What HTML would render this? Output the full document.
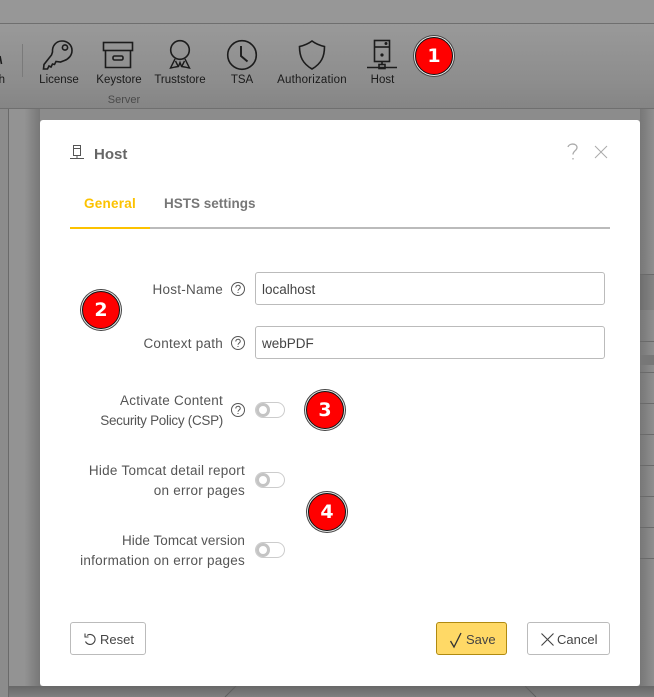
<!DOCTYPE html>
<html><head><meta charset="utf-8"><style>
html,body{margin:0;padding:0}
body{width:654px;height:697px;overflow:hidden;position:relative;background:#8c8c8c;font-family:"Liberation Sans",sans-serif;color:#333}
.a{position:absolute;white-space:nowrap}
.tb{font-size:11.5px;color:#1a1a1a;text-align:center;top:73px;height:14px;line-height:14px}
.lb{font-size:13.5px;letter-spacing:.25px;color:#555;text-align:right;line-height:20px}
.in{left:255px;width:348px;height:31px;border:1px solid #bbb;border-radius:3px;background:#fff;font-size:13.5px;color:#444;line-height:33px;text-indent:6px}
.bd{width:36px;height:36px;border-radius:50%;background:#f00;border:1px solid #111;box-shadow:0 0 0 1px #e8e8e8,0 0 0 2px #444;color:#fff;font:bold 19px/37px "DejaVu Sans",sans-serif;text-align:center}
.sw{left:255px;width:28px;height:14px;border:1px solid #ccc;border-radius:8px;background:#fff}
.sw:after{content:"";position:absolute;left:0;top:0;width:8px;height:8px;border:3px solid #c4c4c4;border-radius:50%;background:#fff}
.btn{height:31px;border:1px solid #bbb;border-radius:3px;background:#fff;font-size:13px;color:#444;line-height:33px}
svg{position:absolute;overflow:visible;fill:none}
.r{left:640px;width:14px;height:1px;background:#6a6a6a}
</style></head><body>
<div class="a" style="left:0;top:0;width:654px;height:23px;background:#979797"></div>
<div class="a" style="left:0;top:23px;width:654px;height:1px;background:#6f6f6f"></div>
<div class="a" style="left:0;top:24px;width:654px;height:84px;background:linear-gradient(#999,#8d8d8d 70%,#858585)"></div>
<div class="a" style="left:0;top:108px;width:654px;height:1px;background:#6f6f6f"></div>
<div class="a" style="left:0;top:109px;width:8px;height:588px;background:#8c8c8c"></div>
<div class="a" style="left:8px;top:109px;width:1px;height:588px;background:#6a6a6a"></div>
<div class="a" style="left:22px;top:44px;width:1px;height:33px;background:#7a7a7a"></div>
<div class="a" style="left:9px;top:109px;width:31px;height:588px;background:linear-gradient(90deg,#939393 50%,#777)"></div>
<div class="a" style="left:640px;top:109px;width:14px;height:588px;background:linear-gradient(90deg,#777,#8f8f8f)"></div>
<div class="a" style="left:9px;top:686px;width:645px;height:11px;background:linear-gradient(#686868,#808080)"></div>
<svg style="left:0;top:0" width="654" height="697"><path d="M225 697l11-11M525 686l11 11" stroke="#5f5f5f" stroke-width="1"/></svg>
<div class="a" style="left:640px;top:275px;width:14px;height:35px;background:rgba(0,0,0,.07)"></div>
<div class="a r" style="top:274px"></div>
<div class="a r" style="top:341px"></div>
<div class="a" style="left:640px;top:355px;width:14px;height:10px;background:#777"></div>
<div class="a r" style="top:372px"></div>
<div class="a r" style="top:403px"></div>
<div class="a r" style="top:434px"></div>
<div class="a r" style="top:465px"></div>
<div class="a r" style="top:496px"></div>
<div class="a r" style="top:527px"></div>
<div class="a r" style="top:558px"></div>

<div class="a tb" style="left:-2px;width:7px;overflow:hidden;text-align:right">h</div>
<svg style="left:0;top:0" width="654" height="110" stroke="#1c1c1c" stroke-width="1.6">
<path d="M0 56l1.500 8"/>
<path d="M44 64.500l-.5 4.500h4l1.500-3 2 1 1.500-3 2 .5 1.500-3 4.500.5 4-1.500c4-1.500 7.500-5 7.500-10 0-6-5-9.500-10-9.500-6 0-10 5-9.500 11l-1 3z"/>
<circle cx="65" cy="47.500" r="2.600"/>
<rect x="103.500" y="42.500" width="29" height="8"/><path d="M105.500 50.500V67.500H130.500V50.500"/><rect x="113" y="56" width="10" height="4" rx="1.500"/>
<circle cx="180" cy="50" r="9.300"/><path d="M175 59l-4.500 9 5-1 3-.5 1.500-4 1.500 4 3 .5 5 1-4.500-9M175.500 61l3 6M184.500 61l-3 6" stroke-width="1.400"/>
<circle cx="242" cy="55" r="14.300"/><path d="M241 46v10l6.500 5.500" stroke-width="1.900"/>
<path d="M312 41c4 3 8 4.500 12.500 5.500 0 10-3 17-12.500 22.500-9.500-5.500-12.500-12.500-12.500-22.500 4.500-1 8.500-2.500 12.500-5.500z"/>
<rect x="374.500" y="40.500" width="15" height="21"/><path d="M374.500 47h15"/><path d="M367 67.500h30"/><path d="M382 61.500v3"/><rect x="379" y="64.500" width="6" height="4"/><circle cx="382" cy="55" r=".8" fill="#1c1c1c"/><circle cx="386" cy="43.500" r=".7" fill="#1c1c1c"/>
</svg>
<div class="a tb" style="left:29px;width:60px">License</div>
<div class="a tb" style="left:89px;width:60px">Keystore</div>
<div class="a tb" style="left:150px;width:60px">Truststore</div>
<div class="a tb" style="left:212px;width:60px">TSA</div>
<div class="a tb" style="left:272px;width:80px;letter-spacing:.2px">Authorization</div>
<div class="a tb" style="left:360px;width:45px">Host</div>
<div class="a tb" style="left:94px;width:60px;top:93px;font-size:11px;color:#4a4a4a">Server</div>

<div class="a" style="left:40px;top:120px;width:600px;height:566px;background:#fff;border-radius:3px"></div>
<svg style="left:0;top:0" width="654" height="697">
<g stroke="#555" stroke-width="1"><rect x="73.500" y="145.500" width="7" height="10"/><path d="M73.500 148.500h7"/><path d="M70 158.500h14M77 155.500v3"/></g>
<path d="M568 147c1-4 9-4 9 .5 0 3-4 3.500-4 7M573 158v1.500" stroke="#aaa" stroke-width="1.300"/>
<path d="M595 146l12 12M607 146l-12 12" stroke="#aaa" stroke-width="1"/>
</svg>
<div class="a" style="left:94px;top:146px;font-size:15px;font-weight:bold;color:#666;line-height:17px">Host</div>
<div class="a" style="left:84px;top:196px;font-size:13.5px;letter-spacing:.25px;font-weight:bold;color:#fcc200;line-height:16px">General</div>
<div class="a" style="left:164px;top:196px;font-size:13.5px;font-weight:bold;color:#777;line-height:16px">HSTS settings</div>
<div class="a" style="left:70px;top:227px;width:540px;height:2px;background:#bbb"></div>
<div class="a" style="left:70px;top:227px;width:80px;height:2px;background:#fcc200"></div>

<div class="a lb" style="top:280px;right:431px">Host-Name</div>
<div class="a lb" style="top:334px;right:431px">Context path</div>
<div class="a lb" style="top:391px;right:431px">Activate Content<br><span style="letter-spacing:-.3px">Security Policy (CSP)</span></div>
<div class="a lb" style="top:461px;right:409px">Hide Tomcat detail report<br>on error pages</div>
<div class="a lb" style="top:531px;right:409px"><span style="letter-spacing:.05px">Hide Tomcat version</span><br>information on error pages</div>
<svg style="left:0;top:0" width="654" height="697" stroke="#555" stroke-width="1">
<g><circle cx="238" cy="289" r="6.500"/><path d="M235.800 287.500c0-3 4.500-3 4.500-.2 0 1.700-2.300 1.700-2.300 3.500M238 292v1"/></g>
<g transform="translate(0,54)"><circle cx="238" cy="289" r="6.500"/><path d="M235.800 287.500c0-3 4.500-3 4.500-.2 0 1.700-2.300 1.700-2.300 3.500M238 292v1"/></g>
<g transform="translate(0,121)"><circle cx="238" cy="289" r="6.500"/><path d="M235.800 287.500c0-3 4.500-3 4.500-.2 0 1.700-2.300 1.700-2.300 3.500M238 292v1"/></g>
</svg>
<div class="a in" style="top:272px">localhost</div>
<div class="a in" style="top:326px">webPDF</div>
<div class="a sw" style="top:402px"></div>
<div class="a sw" style="top:472px"></div>
<div class="a sw" style="top:542px"></div>

<div class="a btn" style="left:70px;top:622px;width:74px"><span class="a" style="left:29px">Reset</span></div>
<div class="a btn" style="left:436px;top:622px;width:69px;background:#ffd966;border-color:#b08a10"><span class="a" style="left:29px">Save</span></div>
<div class="a btn" style="left:527px;top:622px;width:81px"><span class="a" style="left:29px">Cancel</span></div>
<svg style="left:0;top:0" width="654" height="697" stroke="#444" stroke-width="1.100">
<path d="M87 635.500a5 5 0 1 1-1.500 6M85 633.500v3.500h3.500"/>
<path d="M450.500 641l3.500 6 7-14" stroke-width="1.300" stroke="#333"/>
<path d="M541.500 633.500l12 12M553.500 633.500l-12 12"/>
</svg>

<div class="a bd" style="left:415px;top:37px">1</div>
<div class="a bd" style="left:82px;top:291px">2</div>
<div class="a bd" style="left:306px;top:391px">3</div>
<div class="a bd" style="left:308px;top:493px">4</div>
</body></html>
